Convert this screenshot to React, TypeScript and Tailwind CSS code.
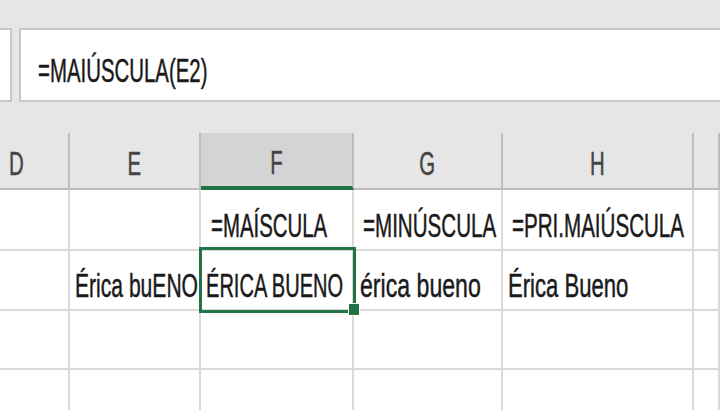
import React from 'react';

const font = { fontFamily: '"Liberation Sans", Arial, sans-serif' };

const cols = [
  { key: 'D', w: 'w-[106px] -ml-[36px]' },
  { key: 'E', w: 'w-[131px]' },
  { key: 'F', w: 'w-[153px]' },
  { key: 'G', w: 'w-[149px]' },
  { key: 'H', w: 'w-[191px]' },
  { key: 'I', w: 'flex-1' },
];

type Cell = { text: string; pad: string; sx: string };

const rows: { h: string; cells: Record<string, Cell> }[] = [
  {
    h: 'h-[61px]',
    cells: {
      F: { text: '=MAÍSCULA', pad: 'pl-[10px]', sx: 'scale-x-[0.6]' },
      G: { text: '=MINÚSCULA', pad: 'pl-[9px]', sx: 'scale-x-[0.605]' },
      H: { text: '=PRI.MAIÚSCULA', pad: 'pl-[9px]', sx: 'scale-x-[0.605]' },
    },
  },
  {
    h: 'h-[60px]',
    cells: {
      E: { text: 'Érica buENO', pad: 'pl-[5px]', sx: 'scale-x-[0.62]' },
      F: { text: 'ÉRICA BUENO', pad: 'pl-[5px]', sx: 'scale-x-[0.59]' },
      G: { text: 'érica bueno', pad: 'pl-[6px]', sx: 'scale-x-[0.68]' },
      H: { text: 'Érica Bueno', pad: 'pl-[5px]', sx: 'scale-x-[0.65]' },
    },
  },
  { h: 'h-[59px]', cells: {} },
  { h: 'h-[60px]', cells: {} },
];

const Txt: React.FC<{ children: React.ReactNode; sx?: string; center?: boolean }> = ({
  children,
  sx = 'scale-x-[0.6]',
  center,
}) => (
  <span
    className={`inline-block whitespace-nowrap text-[34px] leading-none [-webkit-text-stroke:0.5px_currentColor] ${sx} ${
      center ? 'origin-center' : 'origin-left'
    }`}
  >
    {children}
  </span>
);

export default function App() {
  return (
    <div className="relative w-[720px] h-[410px] overflow-hidden bg-[#e6e6e6] text-[#1a1a1a]" style={font}>
      {/* formula bar */}
      <div className="h-[28px]" />
      <div className="flex h-[74px] gap-[7px]">
        <div className="w-[12px] bg-white border-y-2 border-r-2 border-[#c8c8c8]" />
        <div className="flex-1 bg-white border-y-2 border-l-2 border-[#c8c8c8] pl-[17px] pt-[23px]">
          <Txt sx="scale-x-[0.6]">=MAIÚSCULA(E2)</Txt>
        </div>
      </div>
      <div className="h-[31px]" />

      {/* column headers */}
      <div className="flex h-[57px]">
        {cols.map((c) => (
          <div
            key={c.key}
            className={`${c.w} shrink-0 flex items-center justify-center pt-[4px] border-r-2 border-r-[#bdbdbd] text-[#444] ${
              c.key === 'F'
                ? 'bg-[#d4d4d4] border-b-4 border-b-[#217346]'
                : 'border-b-2 border-b-[#bcbcbc]'
            }`}
          >
            <Txt center>{c.key === 'I' ? '' : c.key}</Txt>
          </div>
        ))}
      </div>

      {/* cells */}
      <div className="bg-white">
        {rows.map((r, i) => (
          <div key={i} className={`flex ${r.h}`}>
            {cols.map((c) => {
              const cell = r.cells[c.key];
              return (
                <div
                  key={c.key}
                  className={`${c.w} shrink-0 flex items-end pb-[7px] border-r-2 border-b-2 border-[#dadada] ${cell ? cell.pad : ''}`}
                >
                  {cell && <Txt sx={cell.sx}>{cell.text}</Txt>}
                </div>
              );
            })}
          </div>
        ))}
      </div>

      {/* active cell F2 */}
      <div className="absolute left-[199px] top-[247px] w-[157px] h-[66px] border-[3px] border-[#217346]" />
      <div className="absolute left-[349px] top-[304px] w-[10px] h-[11px] bg-[#217346] outline outline-1 outline-white" />
    </div>
  );
}
